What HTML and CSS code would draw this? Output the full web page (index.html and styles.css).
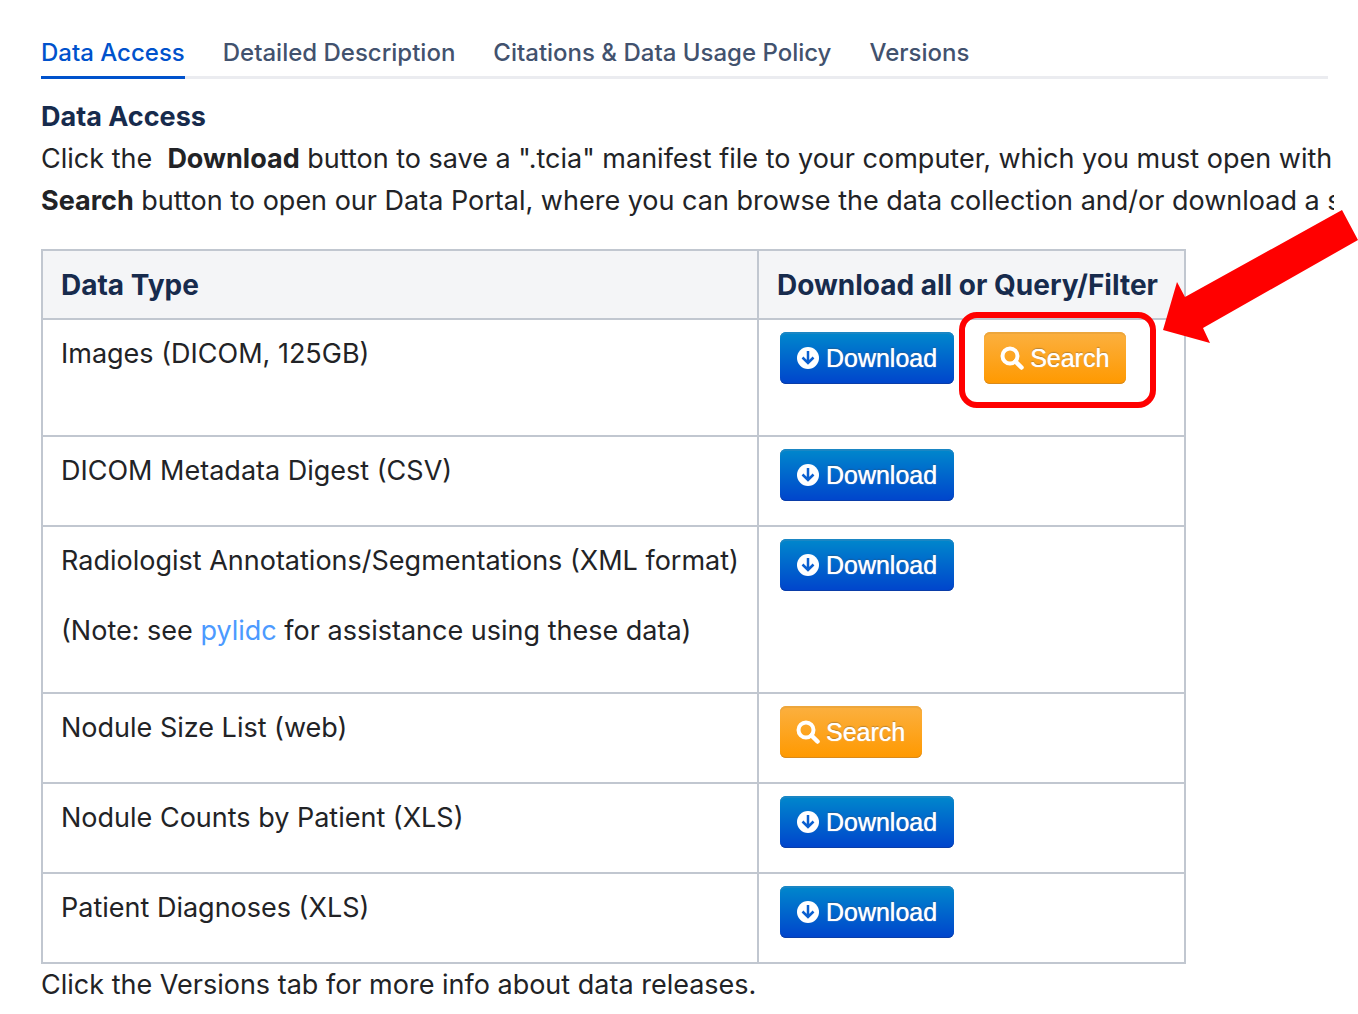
FILE: index.html
```html
<!DOCTYPE html>
<html lang="en">
<head>
  <meta charset="UTF-8" />
  <meta name="viewport" content="width=device-width, initial-scale=1.0"/>
  <title>Data Access</title>
  <link rel="stylesheet" href="styles.css">
</head>
<body>
  <svg class="sprite" aria-hidden="true">
    <symbol id="icon-download" viewBox="0 0 24 24">
      <circle cx="12" cy="12" r="11" fill="#fff"/>
      <path d="M12 5v12M6.500 11.500l5.500 5.500 5.500-5.500" fill="none" stroke="#0a5fd0" stroke-width="2.500"/>
    </symbol>
    <symbol id="icon-search" viewBox="0 0 24 24">
      <circle cx="10" cy="10" r="7.500" fill="none" stroke="#fff" stroke-width="4"/>
      <path d="M15.500 15.500l6 6" stroke="#fff" stroke-width="4.500" stroke-linecap="round"/>
    </symbol>
  </svg>
  <main>
    <nav class="tabs">
      <a class="tab active" href="#access">Data Access</a>
      <a class="tab" href="#description">Detailed Description</a>
      <a class="tab" href="#citations">Citations &amp; Data Usage Policy</a>
      <a class="tab" href="#versions">Versions</a>
    </nav>
    <section id="access">
      <h1>Data Access</h1>
      <p class="intro">Click the &nbsp;<strong>Download</strong> button to save a ".tcia" manifest file to your computer, which you must open with<br><strong>Search</strong> button to open our Data Portal, where you can browse the data collection and/or download a s</p>
      <table>
        <thead>
          <tr>
            <th>Data Type</th>
            <th>Download all or Query/Filter</th>
          </tr>
        </thead>
        <tbody>
          <tr class="tall">
            <td>Images (DICOM, 125GB)</td>
            <td>
              <div class="actions">
                <button class="button download"><svg><use href="#icon-download"/></svg>Download</button>
                <div class="callout">
                  <button class="button search"><svg><use href="#icon-search"/></svg>Search</button>
                  <svg class="arrow" viewBox="0 0 196 134" aria-hidden="true">
                    <path d="M1 120L15 72l8 15L180 0l16 30L41 118l7 15z" fill="#f00"/>
                  </svg>
                </div>
              </div>
            </td>
          </tr>
          <tr>
            <td>DICOM Metadata Digest (CSV)</td>
            <td><button class="button download"><svg><use href="#icon-download"/></svg>Download</button></td>
          </tr>
          <tr>
            <td>
              <p>Radiologist Annotations/Segmentations (XML format)</p>
              <p>(Note: see <a href="#pylidc">pylidc</a> for assistance using these data)</p>
            </td>
            <td><button class="button download"><svg><use href="#icon-download"/></svg>Download</button></td>
          </tr>
          <tr>
            <td>Nodule Size List (web)</td>
            <td><button class="button search"><svg><use href="#icon-search"/></svg>Search</button></td>
          </tr>
          <tr>
            <td>Nodule Counts by Patient (XLS)</td>
            <td><button class="button download"><svg><use href="#icon-download"/></svg>Download</button></td>
          </tr>
          <tr>
            <td>Patient Diagnoses (XLS)</td>
            <td><button class="button download"><svg><use href="#icon-download"/></svg>Download</button></td>
          </tr>
        </tbody>
      </table>
      <p class="note">Click the Versions tab for more info about data releases.</p>
    </section>
  </main>
</body>
</html>
```

FILE: styles.css
```css
* { box-sizing: border-box; }
body {
  font-family: Inter, sans-serif;
  font-size: 27px;
  line-height: 42px;
  margin: 0;
  color: #222326;
  background-color: white;
  overflow-x: hidden;
}
main { padding: 32px 30px 8px 41px; }
p { margin: 0; }
strong { font-weight: 700; }
.sprite { display: none; }
.tabs {
  display: flex;
  gap: 38px;
  box-shadow: inset 0 -3px #ebecf0;
}
.tab {
  font-size: 24px;
  font-weight: 500;
  padding-bottom: 2px;
  border-bottom: 3px solid transparent;
  color: #42526e;
  text-decoration: none;
  white-space: nowrap;
}
.tab.active {
  color: #0052cc;
  border-color: #0052cc;
}
h1 {
  font-size: 27px;
  font-weight: 700;
  color: #172b4d;
  margin: 17px 0 0;
}
.intro {
  margin-right: -6px;
  white-space: nowrap;
  overflow: hidden;
}
table {
  border-collapse: collapse;
  margin-top: 27px;
}
th, td {
  border: 2px solid #c1c7d0;
  padding: 12px 18px 24px;
  text-align: left;
  vertical-align: top;
  white-space: nowrap;
}
th {
  background-color: #f4f5f7;
  color: #172b4d;
  font-size: 28px;
  font-weight: 700;
  padding: 13px 18px 12px;
}
th:last-child { padding-right: 26px; }
td:first-child { padding-top: 13px; }
td:last-child { padding-left: 21px; }
.tall td { padding-bottom: 51px; }
td p { margin-bottom: 28px; }
td p:last-child { margin-bottom: 16px; }
td a {
  color: #4c9aff;
  text-decoration: none;
}
.actions {
  display: flex;
  gap: 30px;
}
.button {
  display: flex;
  align-items: center;
  gap: 6px;
  height: 52px;
  padding: 0 17px 0 16px;
  border: none;
  border-radius: 6px;
  font-family: "Liberation Sans", Arial, sans-serif;
  font-size: 25px;
  color: white;
  cursor: pointer;
}
.button svg {
  width: 24px;
  height: 24px;
}
.download {
  background: linear-gradient(#0088cc, #0044cc);
  box-shadow: inset 0 2px #1a86c4, inset 0 -1px #0a3da8;
  text-shadow: 0 0 1px white, 0 -1px 1px rgba(0,0,0,0.3);
}
.search {
  background: linear-gradient(#fbb040, #ff9900);
  box-shadow: inset 0 2px #eda63c, inset 0 -1px #d98a1c;
  text-shadow: 0 0 1px white, 0 -1px 1px rgba(0,0,0,0.3);
}
/* red marker around the search button */
.callout { position: relative; }
.callout::after {
  content: "";
  position: absolute;
  inset: -20px -30px -24px -25px;
  border: 6px solid #f00;
  border-radius: 18px;
  pointer-events: none;
}
.arrow {
  position: absolute;
  left: 178px;
  top: -122px;
  width: 196px;
  height: 134px;
}
```
